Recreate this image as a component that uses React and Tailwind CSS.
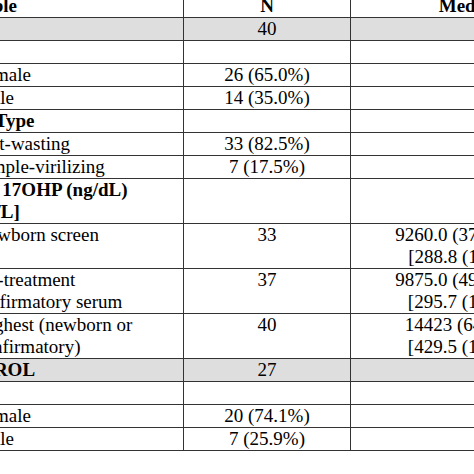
const rows = [
  { label: "CAH", bold: true, n: "40", gray: true },
  { label: "Sex", bold: true },
  { label: "Female", sub: true, n: "26 (65.0%)" },
  { label: "Male", sub: true, n: "14 (35.0%)" },
  { label: "CAH Type", bold: true },
  { label: "Salt-wasting", sub: true, n: "33 (82.5%)" },
  { label: "Simple-virilizing", sub: true, n: "7 (17.5%)" },
  { label: ["Initial 17OHP (ng/dL)", "[nmol/L]"], bold: true },
  {
    label: ["Newborn screen"],
    sub: true,
    n: "33",
    med: ["9260.0 (3720.5 – 16450.0)", "[288.8 (112.4 – 518.3)]"],
  },
  {
    label: ["Pre-treatment", "confirmatory serum"],
    sub: true,
    tight: true,
    n: "37",
    med: ["9875.0 (4910.0 – 17800.0)", "[295.7 (147.2 – 533.1)]"],
  },
  {
    label: ["Highest (newborn or", "confirmatory)"],
    sub: true,
    n: "40",
    med: ["14423 (6420.0 – 28900)", "[429.5 (152.0 – 880.5)]"],
  },
  { label: "CONTROL", bold: true, n: "27", gray: true, shift: true },
  { label: "Sex", bold: true },
  { label: "Female", sub: true, n: "20 (74.1%)" },
  { label: "Male", sub: true, n: "7 (25.9%)" },
];

const lines = (v) =>
  Array.isArray(v)
    ? v.map((t, i) => (
        <span key={i}>
          {i > 0 && <br />}
          {t}
        </span>
      ))
    : v;

export default function App() {
  return (
    <div className="w-[474px] h-[474px] overflow-hidden bg-white">
      <table
        className="ml-[-58px] mt-[-6px] border-collapse text-[19px] leading-[22px] text-black"
        style={{ fontFamily: '"Liberation Serif", "Times New Roman", serif' }}
      >
        <thead>
          <tr>
            <th className="w-[241px] min-w-[241px] border border-[#333] pl-[5px] text-left align-top font-bold">
              Variable
            </th>
            <th className="w-[167px] min-w-[167px] border border-[#333] text-center align-top font-bold">
              N
            </th>
            <th className="w-[292px] min-w-[292px] border border-[#333] text-center align-top font-bold">
              Median (IQR)
            </th>
          </tr>
        </thead>
        <tbody>
          {rows.map((r, i) => (
            <tr key={i} className={r.gray ? "bg-[#dedede]" : ""}>
              <td
                className={
                  "border border-[#333] align-top whitespace-nowrap " +
                  (r.bold ? "font-bold " : "") +
                  (r.sub ? (r.tight ? "pl-[29px]" : "pl-[32px]") : "pl-[5px]")
                }
              >
                {r.shift ? (
                  <span className="ml-[-9px]">{r.label}</span>
                ) : (
                  lines(r.label)
                )}
              </td>
              <td className="border border-[#333] text-center align-top whitespace-nowrap">
                {r.n || ""}
              </td>
              <td className="border border-[#333] text-center align-top whitespace-nowrap">
                {r.med ? lines(r.med) : ""}
              </td>
            </tr>
          ))}
        </tbody>
      </table>
    </div>
  );
}
